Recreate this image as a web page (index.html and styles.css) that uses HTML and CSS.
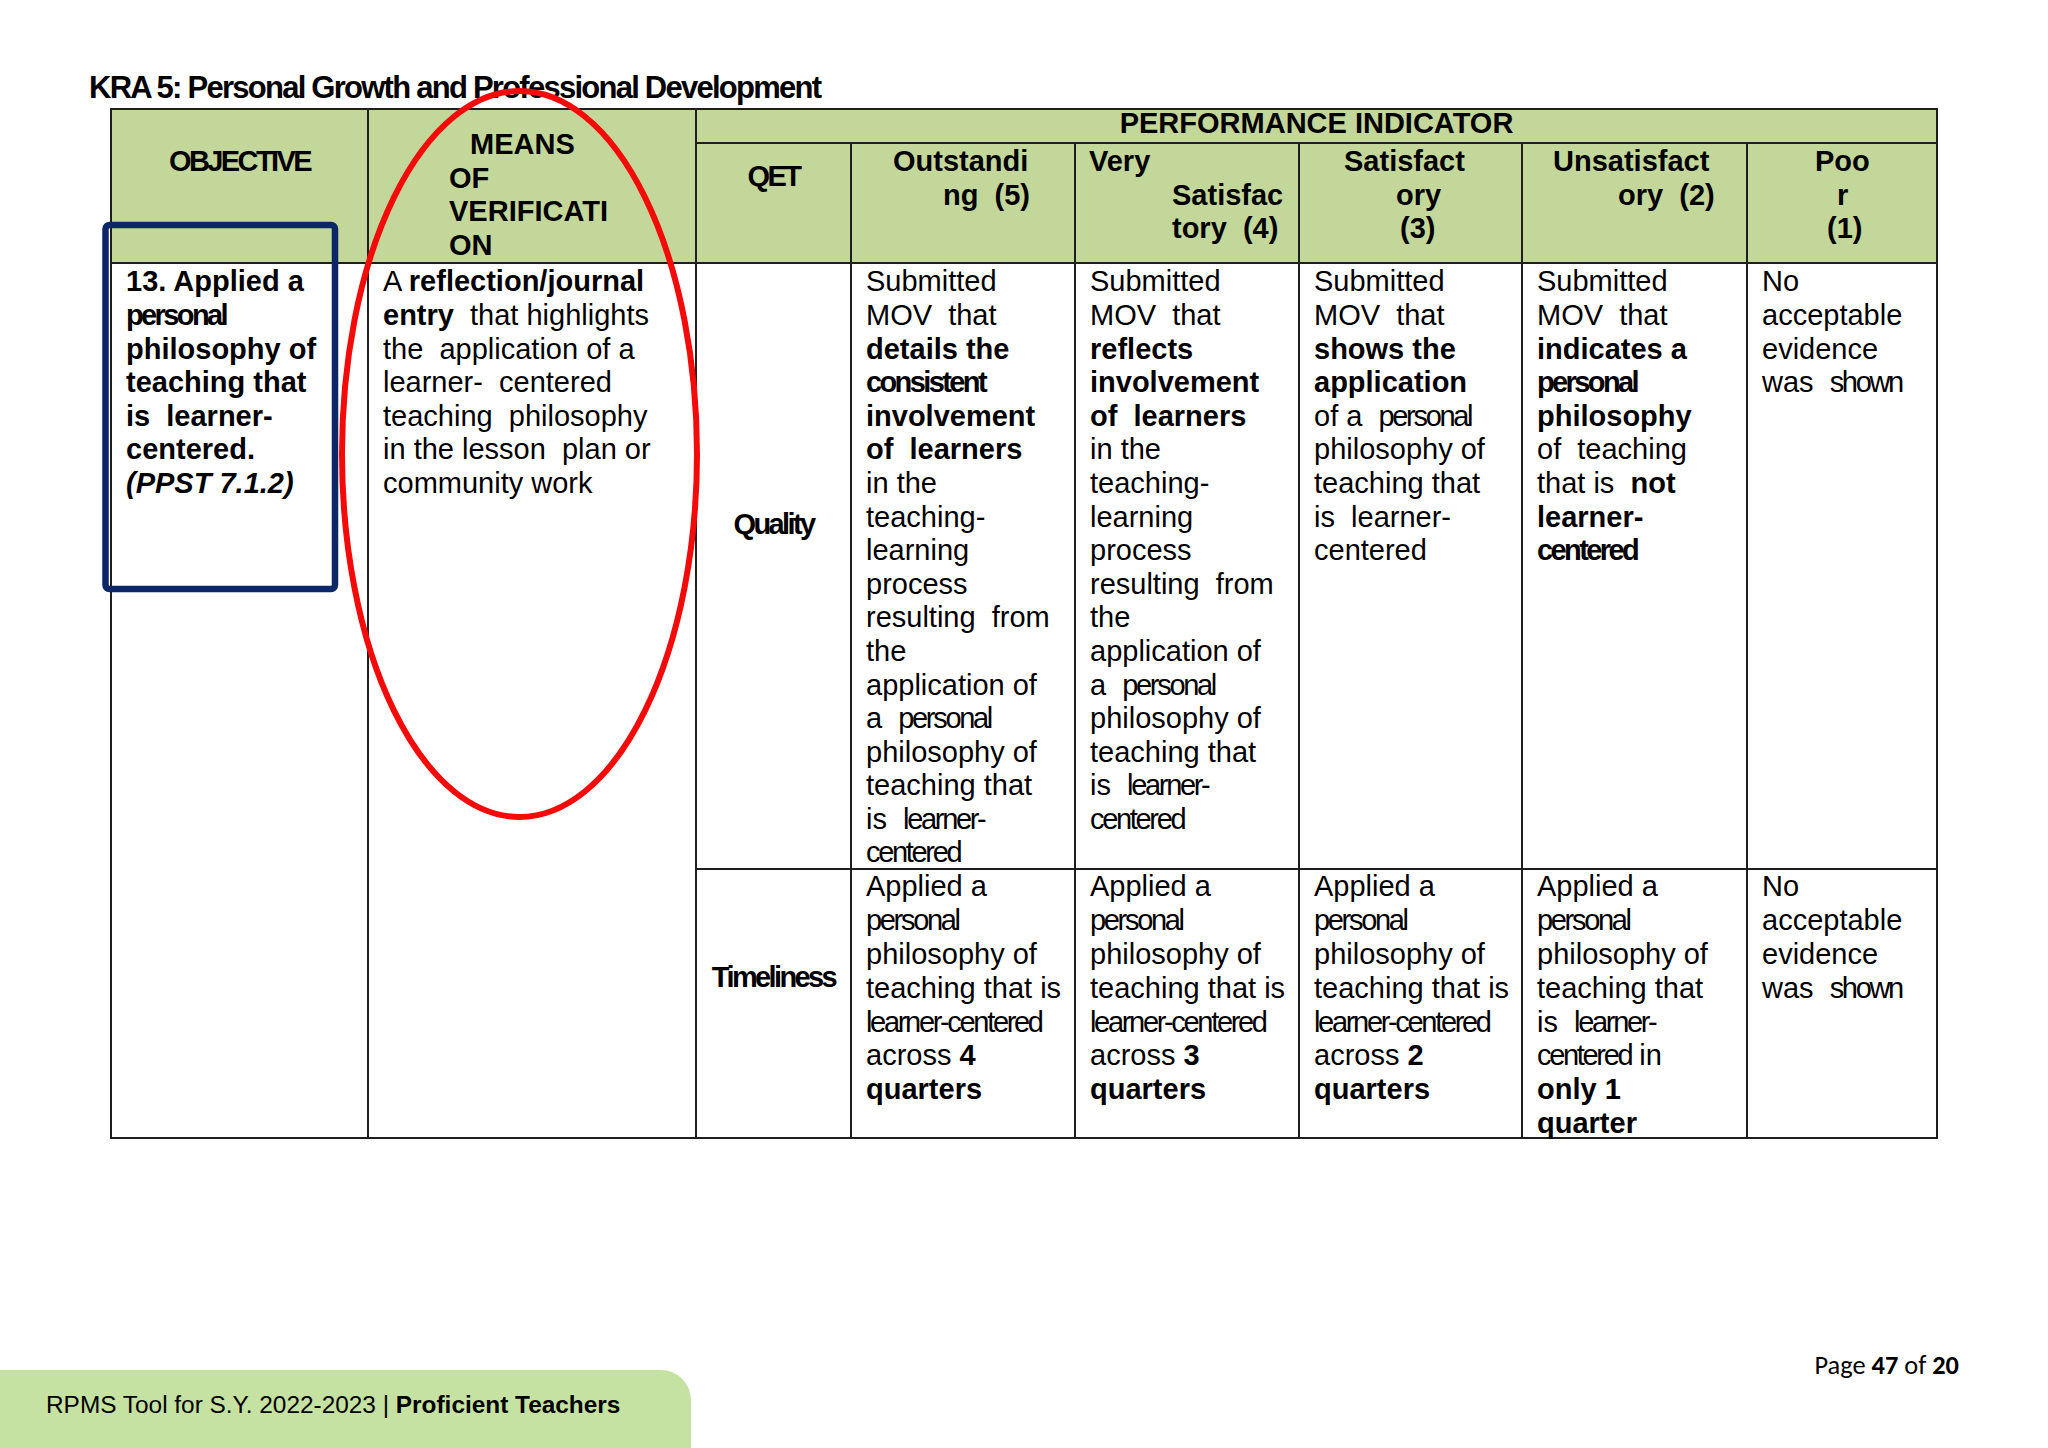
FILE: index.html
```html
<!DOCTYPE html>
<html lang="en">
<head>
<meta charset="utf-8">
<title>KRA 5: Personal Growth and Professional Development</title>
<link rel="stylesheet" href="styles.css">
</head>
<body>
<div class="sheet">
  <h1 class="title">KRA 5: Personal Growth and Professional Development</h1>
  <table class="rpms">
    <colgroup>
      <col class="c-obj"><col class="c-mov"><col class="c-qet"><col class="c-r5"><col class="c-r4"><col class="c-r3"><col class="c-r2"><col class="c-r1">
    </colgroup>
    <thead>
      <tr class="h1">
        <th rowspan="2" class="th-obj"><span class="nx">OBJECTIVE</span></th>
        <th rowspan="2" class="th-mov">
          <span class="ln o102">MEANS</span>
          <span class="ln o81">OF</span>
          <span class="ln o81">VERIFICATI</span>
          <span class="ln o81">ON</span>
        </th>
        <th colspan="6" class="th-pi">PERFORMANCE INDICATOR</th>
      </tr>
      <tr class="h2">
        <th class="th-qet"><span class="nx">QET</span></th>
        <th class="th-r">
          <span class="ln o42">Outstandi</span>
          <span class="ln o92">ng&nbsp; (5)</span>
        </th>
        <th class="th-r">
          <span class="ln o8">Very</span>
          <span class="ln o97">Satisfac</span>
          <span class="ln o97">tory&nbsp; (4)</span>
        </th>
        <th class="th-r">
          <span class="ln o45">Satisfact</span>
          <span class="ln o97">ory</span>
          <span class="ln o101">(3)</span>
        </th>
        <th class="th-r">
          <span class="ln o31">Unsatisfact</span>
          <span class="ln o96">ory&nbsp; (2)</span>
        </th>
        <th class="th-r">
          <span class="ln o68">Poo</span>
          <span class="ln o90">r</span>
          <span class="ln o80">(1)</span>
        </th>
      </tr>
    </thead>
    <tbody>
      <tr class="r-quality">
        <td rowspan="2" class="td-obj">
          <span class="ln">13. Applied a</span>
          <span class="ln nb">personal</span>
          <span class="ln">philosophy of</span>
          <span class="ln">teaching that</span>
          <span class="ln">is&nbsp; learner-</span>
          <span class="ln">centered.</span>
          <span class="ln it">(PPST 7.1.2)</span>
        </td>
        <td rowspan="2" class="td-mov">
          <span class="ln">A <b>reflection/journal</b></span>
          <span class="ln"><b>entry</b>&nbsp; that highlights</span>
          <span class="ln">the&nbsp; application of a</span>
          <span class="ln">learner-&nbsp; centered</span>
          <span class="ln">teaching&nbsp; philosophy</span>
          <span class="ln">in the lesson&nbsp; plan or</span>
          <span class="ln">community work</span>
        </td>
        <td class="td-qet q-quality"><span class="nx">Quality</span></td>
        <td>
          <span class="ln">Submitted</span>
          <span class="ln">MOV&nbsp; that</span>
          <span class="ln"><b>details the</b></span>
          <span class="ln"><b class="nb">consistent</b></span>
          <span class="ln"><b>involvement</b></span>
          <span class="ln"><b>of&nbsp; learners</b></span>
          <span class="ln">in the</span>
          <span class="ln">teaching-</span>
          <span class="ln">learning</span>
          <span class="ln">process</span>
          <span class="ln">resulting&nbsp; from</span>
          <span class="ln">the</span>
          <span class="ln">application of</span>
          <span class="ln">a&nbsp; <span class="n">personal</span></span>
          <span class="ln">philosophy of</span>
          <span class="ln">teaching that</span>
          <span class="ln">is&nbsp; <span class="n">learner-</span></span>
          <span class="ln n">centered</span>
        </td>
        <td>
          <span class="ln">Submitted</span>
          <span class="ln">MOV&nbsp; that</span>
          <span class="ln"><b>reflects</b></span>
          <span class="ln"><b>involvement</b></span>
          <span class="ln"><b>of&nbsp; learners</b></span>
          <span class="ln">in the</span>
          <span class="ln">teaching-</span>
          <span class="ln">learning</span>
          <span class="ln">process</span>
          <span class="ln">resulting&nbsp; from</span>
          <span class="ln">the</span>
          <span class="ln">application of</span>
          <span class="ln">a&nbsp; <span class="n">personal</span></span>
          <span class="ln">philosophy of</span>
          <span class="ln">teaching that</span>
          <span class="ln">is&nbsp; <span class="n">learner-</span></span>
          <span class="ln n">centered</span>
        </td>
        <td>
          <span class="ln">Submitted</span>
          <span class="ln">MOV&nbsp; that</span>
          <span class="ln"><b>shows the</b></span>
          <span class="ln"><b>application</b></span>
          <span class="ln">of a&nbsp; <span class="n">personal</span></span>
          <span class="ln">philosophy of</span>
          <span class="ln">teaching that</span>
          <span class="ln">is&nbsp; learner-</span>
          <span class="ln">centered</span>
        </td>
        <td>
          <span class="ln">Submitted</span>
          <span class="ln">MOV&nbsp; that</span>
          <span class="ln"><b>indicates a</b></span>
          <span class="ln"><b class="nb">personal</b></span>
          <span class="ln"><b>philosophy</b></span>
          <span class="ln">of&nbsp; teaching</span>
          <span class="ln">that is&nbsp; <b>not</b></span>
          <span class="ln"><b>learner-</b></span>
          <span class="ln"><b class="nb">centered</b></span>
        </td>
        <td>
          <span class="ln">No</span>
          <span class="ln">acceptable</span>
          <span class="ln">evidence</span>
          <span class="ln">was&nbsp; <span class="n">shown</span></span>
        </td>
      </tr>
      <tr class="r-time">
        <td class="td-qet q-time"><span class="nx">Timeliness</span></td>
        <td>
          <span class="ln">Applied a</span>
          <span class="ln n">personal</span>
          <span class="ln">philosophy of</span>
          <span class="ln">teaching that is</span>
          <span class="ln n">learner-centered</span>
          <span class="ln">across <b>4</b></span>
          <span class="ln"><b>quarters</b></span>
        </td>
        <td>
          <span class="ln">Applied a</span>
          <span class="ln n">personal</span>
          <span class="ln">philosophy of</span>
          <span class="ln">teaching that is</span>
          <span class="ln n">learner-centered</span>
          <span class="ln">across <b>3</b></span>
          <span class="ln"><b>quarters</b></span>
        </td>
        <td>
          <span class="ln">Applied a</span>
          <span class="ln n">personal</span>
          <span class="ln">philosophy of</span>
          <span class="ln">teaching that is</span>
          <span class="ln n">learner-centered</span>
          <span class="ln">across <b>2</b></span>
          <span class="ln"><b>quarters</b></span>
        </td>
        <td>
          <span class="ln">Applied a</span>
          <span class="ln n">personal</span>
          <span class="ln">philosophy of</span>
          <span class="ln">teaching that</span>
          <span class="ln">is&nbsp; <span class="n">learner-</span></span>
          <span class="ln"><span class="n">centered</span> in</span>
          <span class="ln"><b>only 1</b></span>
          <span class="ln"><b>quarter</b></span>
        </td>
        <td>
          <span class="ln">No</span>
          <span class="ln">acceptable</span>
          <span class="ln">evidence</span>
          <span class="ln">was&nbsp; <span class="n">shown</span></span>
        </td>
      </tr>
    </tbody>
  </table>
</div>
<div class="foot">
  <div class="tab">RPMS Tool for S.Y. 2022-2023 |&nbsp;<b>Proficient Teachers</b></div>
  <div class="pageno">Page <b>47</b> of <b>20</b></div>
</div>
<svg class="marks" width="2048" height="1448" viewBox="0 0 2048 1448" aria-hidden="true">
  <rect class="mark-box" x="105.5" y="225" width="229.5" height="364" rx="4" ry="4"/>
  <ellipse class="mark-ring" cx="519.5" cy="454" rx="177.5" ry="363"/>
</svg>
</body>
</html>
```
FILE: styles.css
```css
* { box-sizing: border-box; }
html, body { margin: 0; padding: 0; }
body {
  width: 2048px;
  height: 1448px;
  background: #ffffff;
  color: #000;
  font-family: "Liberation Sans", Arial, sans-serif;
  position: relative;
  overflow: hidden;
  display: flex;
  flex-direction: column;
}
.sheet {
  padding: 70px 0 0 89px;
}
.title {
  margin: 0;
  height: 38px;
  font-size: 31px;
  line-height: 36px;
  font-weight: 700;
  letter-spacing: -1.75px;
  white-space: nowrap;
}
.rpms {
  margin-left: 21px;
  border-collapse: collapse;
  table-layout: fixed;
  width: 1826px;
}
.c-obj { width: 257px; }
.c-mov { width: 328px; }
.c-qet { width: 155px; }
.c-r5 { width: 224px; }
.c-r4 { width: 224px; }
.c-r3 { width: 223px; }
.c-r2 { width: 225px; }
.c-r1 { width: 190px; }

.rpms th, .rpms td {
  border: 2px solid #1e1e1e;
  padding: 0;
  font-size: 29px;
  line-height: 33.6px;
  vertical-align: top;
  text-align: left;
  font-weight: 400;
}
.rpms th {
  background: #c4d79b;
  font-weight: 700;
}
.h1 { height: 34px; }
.h2 { height: 120px; }
.r-quality { height: 606px; }
.r-time { height: 269px; }
.r-quality td { line-height: 33.6px; }
.r-time td { line-height: 33.8px; }
.r-quality td .ln:last-child { margin-bottom: -4px; }
.r-time td .ln:last-child { margin-bottom: -8px; }

.ln { display: block; white-space: nowrap; }
.n { letter-spacing: -0.08em; }
.nb { letter-spacing: -0.09em; }
.nx { letter-spacing: -0.09em; }
.it { font-style: italic; }

.th-obj { text-align: center !important; padding-top: 35px !important; }
.th-mov { padding-top: 18px !important; }
.th-pi {
  text-align: center !important;
  vertical-align: top !important;
  line-height: 26px !important;
  padding-top: 0 !important;
  padding-bottom: 4px !important;
}
.th-qet { text-align: center !important; padding-top: 16px !important; }
.th-r { padding-top: 1px !important; }

.o8 { padding-left: 13px; }
.o31 { padding-left: 30px; }
.o42 { padding-left: 41px; }
.o45 { padding-left: 44px; }
.o68 { padding-left: 67px; }
.o80 { padding-left: 79px; }
.o81 { padding-left: 80px; }
.o90 { padding-left: 89px; }
.o92 { padding-left: 91px; }
.o96 { padding-left: 95px; }
.o97 { padding-left: 96px; }
.o101 { padding-left: 100px; }
.o102 { padding-left: 101px; }

.rpms td { padding: 1px 4px 0 14px; }
.r-time td { padding-top: 0; }
.td-obj { font-weight: 700 !important; padding-top: 1px !important; }
.td-mov { padding-top: 1px !important; }
.td-qet {
  text-align: center !important;
  font-weight: 700 !important;
  padding-left: 0 !important;
  padding-right: 0 !important;
}
.q-quality { padding-top: 244px !important; }
.q-time { padding-top: 91px !important; }

.foot {
  margin-top: auto;
  height: 98px;
  display: flex;
  justify-content: space-between;
  align-items: flex-start;
}
.tab {
  align-self: flex-end;
  width: 691px;
  height: 78px;
  background: #c6e2a2;
  border-top-right-radius: 30px;
  display: flex;
  align-items: center;
  padding: 0 0 8px 46px;
  font-size: 24.4px;
  white-space: nowrap;
}
.pageno {
  margin-right: 89px;
  font-family: "Carlito", "Lato", "Open Sans", sans-serif;
  font-size: 26.4px;
  line-height: 30px;
  white-space: nowrap;
}
.marks {
  position: absolute;
  left: 0;
  top: 0;
  pointer-events: none;
}
.mark-box {
  fill: none;
  stroke: #0c2766;
  stroke-width: 6.5;
}
.mark-ring {
  fill: none;
  stroke: #f50a0a;
  stroke-width: 6;
}
```
